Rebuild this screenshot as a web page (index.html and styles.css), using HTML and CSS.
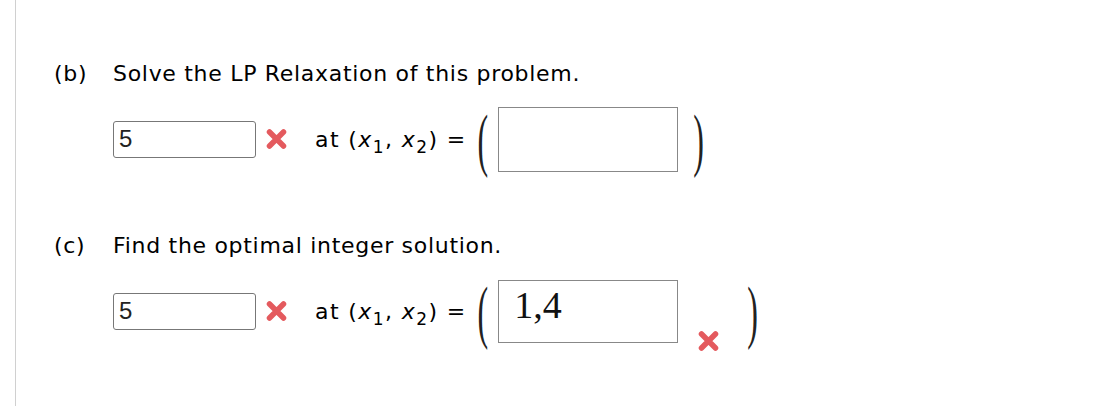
FILE: index.html
```html
<!DOCTYPE html>
<html lang="en">
<head>
   <meta charset="UTF-8">
   <meta name="viewport" content="width=device-width, initial-scale=1.0">
   <title>LP Relaxation</title>
   <link rel="stylesheet" href="styles.css">
</head>
<body>
   <div class="sheet">
       <div class="part part-b">
           <p class="prompt"><span class="label">(b)</span><span>Solve the LP Relaxation of this problem.</span></p>
           <div class="answer">
               <input class="num" type="text" value="5">
               <svg class="wrong" viewBox="0 0 24 22"><path d="M5 4 L19 18 M19 4 L5 18"/></svg>
               <span class="at">at (<i>x</i><sub>1</sub>, <i>x</i><sub>2</sub>) =</span>
               <span class="paren open">(</span>
               <input class="pair" type="text" value="">
               <span class="paren close">)</span>
           </div>
       </div>
       <div class="part part-c">
           <p class="prompt"><span class="label">(c)</span><span>Find the optimal integer solution.</span></p>
           <div class="answer">
               <input class="num" type="text" value="5">
               <svg class="wrong" viewBox="0 0 24 22"><path d="M5 4 L19 18 M19 4 L5 18"/></svg>
               <span class="at">at (<i>x</i><sub>1</sub>, <i>x</i><sub>2</sub>) =</span>
               <span class="paren open">(</span>
               <input class="pair" type="text" value="1,4">
               <svg class="wrong low" viewBox="0 0 24 22"><path d="M5 4 L19 18 M19 4 L5 18"/></svg>
               <span class="paren close far">)</span>
           </div>
       </div>
   </div>
</body>
</html>
```

FILE: styles.css
```css
body {
    margin: 0;
    padding: 0;
    background-color: #fff;
    font-family: "DejaVu Sans", Verdana, sans-serif;
    color: #000;
}
.sheet {
    margin-left: 15px;
    border-left: 1px solid #d0d0d0;
    min-height: 406px;
    padding: 0 0 0 38px;
    box-sizing: border-box;
}
.part-b {
    padding-top: 61px;
}
.part-c {
    padding-top: 61px;
}
.prompt {
    display: flex;
    margin: 0;
    font-size: 22px;
    letter-spacing: 0.7px;
    line-height: 26px;
}
.label {
    width: 59px;
    flex: none;
}
.answer {
    display: flex;
    align-items: center;
    margin-left: 59px;
    margin-top: 19px;
    height: 66px;
}
.num {
    width: 143px;
    height: 37px;
    box-sizing: border-box;
    border: 1px solid #777;
    border-radius: 3px;
    padding: 0 5px;
    font-family: "Liberation Sans", Arial, sans-serif;
    font-size: 24px;
    color: #222;
    margin: 0;
}
.wrong {
    width: 25px;
    height: 22px;
    margin-left: 8px;
    flex: none;
}
.wrong path {
    stroke: #e45a5e;
    stroke-width: 5.5;
    stroke-linecap: round;
    fill: none;
}
.wrong.low {
    align-self: flex-end;
    margin-left: 18px;
    margin-bottom: -8px;
}
.at {
    margin-left: 26px;
    font-size: 22px;
    letter-spacing: 1.4px;
    white-space: nowrap;
}
.at i {
    font-style: italic;
}
.at sub {
    font-size: 17px;
    vertical-align: -6px;
    line-height: 0;
}
.paren {
    font-family: "Liberation Serif", "Times New Roman", serif;
    font-size: 32px;
    line-height: 30px;
    transform: scale(1, 2.2);
    display: inline-block;
    color: #222;
}
.paren.open {
    margin-left: 11px;
    margin-right: 10px;
}
.paren.close {
    margin-left: 15px;
}
.paren.close.far {
    margin-left: 26px;
}
.pair {
    width: 180px;
    height: 65px;
    box-sizing: border-box;
    border: 1px solid #888;
    border-radius: 0;
    margin: 0;
    padding: 0 15px;
    font-family: "Liberation Serif", "Times New Roman", serif;
    font-size: 38px;
    color: #111;
}
.part-c .pair {
    height: 63px;
    padding-bottom: 12px;
}
```
